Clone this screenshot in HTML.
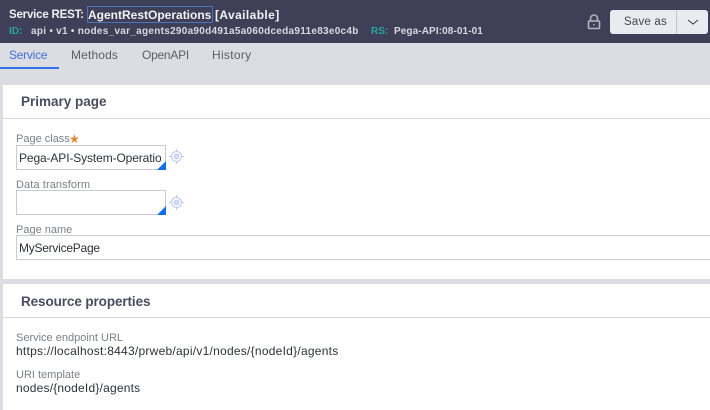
<!DOCTYPE html>
<html><head><meta charset="utf-8"><style>
html,body{margin:0;padding:0}
body{width:710px;height:410px;overflow:hidden;position:relative;background:#dcdde2;font-family:"Liberation Sans",sans-serif;color:#3c3f4a;filter:blur(.3px)}
.a{position:absolute;white-space:nowrap;line-height:16px}
.box{position:absolute;background:#fff;border:1px solid #c9cbd4;box-sizing:border-box}
.tri{position:absolute;width:0;height:0;border-left:9px solid transparent;border-bottom:9px solid #0f6ff0}
.lab{color:#7c7f88;font-size:11px}
.val{color:#2f323b;font-size:12px;letter-spacing:.25px}
.h{color:#4a4d5e;font-size:13.5px;font-weight:bold}
.tab{font-size:12px;color:#5b5e6b;top:47px}
</style></head><body>
<div class="a" style="left:0;top:0;width:710px;height:43px;background:#3f4058"></div>
<div class="a" style="left:9px;top:7px;font-size:11.5px;font-weight:bold;color:#f2f2f5;letter-spacing:-.2px">Service REST:</div>
<div class="a" style="left:87px;top:6px;width:126px;height:17px;border:1px solid #4a78c0;box-sizing:border-box;border-radius:1px"></div>
<div class="a" style="left:88px;top:7px;font-size:12px;font-weight:bold;color:#f2f2f5;letter-spacing:0">AgentRestOperations</div>
<div class="a" style="left:215px;top:7px;font-size:12px;font-weight:bold;color:#f2f2f5;letter-spacing:.4px">[Available]</div>
<div class="a" style="left:9px;top:24px;font-size:10px;font-weight:bold;color:#2aa59c">ID:</div>
<div class="a" style="left:31px;top:24px;font-size:10px;font-weight:bold;color:#d8d9e0;letter-spacing:.28px">api • v1 • nodes_var_agents290a90d491a5a060dceda911e83e0c4b</div>
<div class="a" style="left:371px;top:24px;font-size:10px;font-weight:bold;color:#2aa59c">RS:</div>
<div class="a" style="left:394px;top:24px;font-size:10px;font-weight:bold;color:#d8d9e0;letter-spacing:.1px">Pega-API:08-01-01</div>
<svg class="a" style="left:587px;top:14px" width="14" height="16" viewBox="0 0 14 16" fill="none" stroke="#b4b5bd" stroke-width="1.6"><path d="M3.5 7V4.5a3.5 3.5 0 0 1 7 0V7"/><rect x="1.5" y="7" width="11" height="7.5" rx="1"/><circle cx="7" cy="10.7" r=".8" fill="#b4b5bd" stroke="none"/></svg>
<div class="a" style="left:610px;top:10px;width:98px;height:24px;background:#eaebf1;border-radius:3px"></div>
<div class="a" style="left:676px;top:10px;width:1px;height:24px;background:#c4c5cd"></div>
<div class="a" style="left:624px;top:14px;font-size:11.5px;color:#44464f;letter-spacing:.2px">Save as</div>
<svg class="a" style="left:687px;top:19px" width="12" height="7" viewBox="0 0 12 7" fill="none" stroke="#44464f" stroke-width="1.1"><path d="M1 1l5 4 5-4"/></svg>

<div class="a tab" style="left:9px;color:#3f71dc;letter-spacing:-.25px">Service</div>
<div class="a" style="left:0;top:67px;width:59px;height:2px;background:#2f6fe8"></div>
<div class="a tab" style="left:71px;letter-spacing:.15px">Methods</div>
<div class="a tab" style="left:142px;letter-spacing:-.25px">OpenAPI</div>
<div class="a tab" style="left:212px;letter-spacing:.3px">History</div>

<div class="a" style="left:3px;top:85px;width:707px;height:194px;background:#fff"></div>
<div class="a" style="left:3px;top:118px;width:707px;height:1px;background:#d3d4dc"></div>
<div class="a h" style="left:21px;top:94px">Primary page</div>
<div class="a lab" style="left:16px;top:131px">Page class</div>
<div class="a" style="left:69px;top:131px;color:#d98a2b;font-size:12px">★</div>
<div class="box" style="left:16px;top:145px;width:150px;height:25px"></div>
<div class="a val" style="left:19px;top:150px;width:142px;overflow:hidden;letter-spacing:-.12px">Pega-API-System-Operations</div>
<div class="tri" style="left:157px;top:161px"></div>
<svg class="a" style="left:169px;top:149px" width="15" height="15" viewBox="0 0 15 15" fill="none" stroke="#b9c9f2"><circle cx="7.5" cy="7.5" r="5"/><circle cx="7.5" cy="7.5" r="2.4" fill="#d5dff7"/><path d="M7.5 0v2.5M7.5 12.5V15M0 7.5h2.5M12.5 7.5H15"/></svg>
<div class="a lab" style="left:16px;top:177px;letter-spacing:.1px">Data transform</div>
<div class="box" style="left:16px;top:190px;width:150px;height:25px"></div>
<div class="tri" style="left:157px;top:206px"></div>
<svg class="a" style="left:169px;top:195px" width="15" height="15" viewBox="0 0 15 15" fill="none" stroke="#b9c9f2"><circle cx="7.5" cy="7.5" r="5"/><circle cx="7.5" cy="7.5" r="2.4" fill="#d5dff7"/><path d="M7.5 0v2.5M7.5 12.5V15M0 7.5h2.5M12.5 7.5H15"/></svg>
<div class="a lab" style="left:16px;top:222px">Page name</div>
<div class="box" style="left:16px;top:235px;width:700px;height:25px"></div>
<div class="a val" style="left:19px;top:240px;letter-spacing:-.25px">MyServicePage</div>

<div class="a" style="left:3px;top:284px;width:707px;height:126px;background:#fff"></div>
<div class="a" style="left:3px;top:317px;width:707px;height:1px;background:#d3d4dc"></div>
<div class="a h" style="left:21px;top:294px;letter-spacing:-.1px">Resource properties</div>
<div class="a lab" style="left:16px;top:330px">Service endpoint URL</div>
<div class="a val" style="left:16px;top:343px">https://localhost:8443/prweb/api/v1/nodes/{nodeId}/agents</div>
<div class="a lab" style="left:16px;top:367px">URI template</div>
<div class="a val" style="left:16px;top:380px;letter-spacing:.2px">nodes/{nodeId}/agents</div>
</body></html>
